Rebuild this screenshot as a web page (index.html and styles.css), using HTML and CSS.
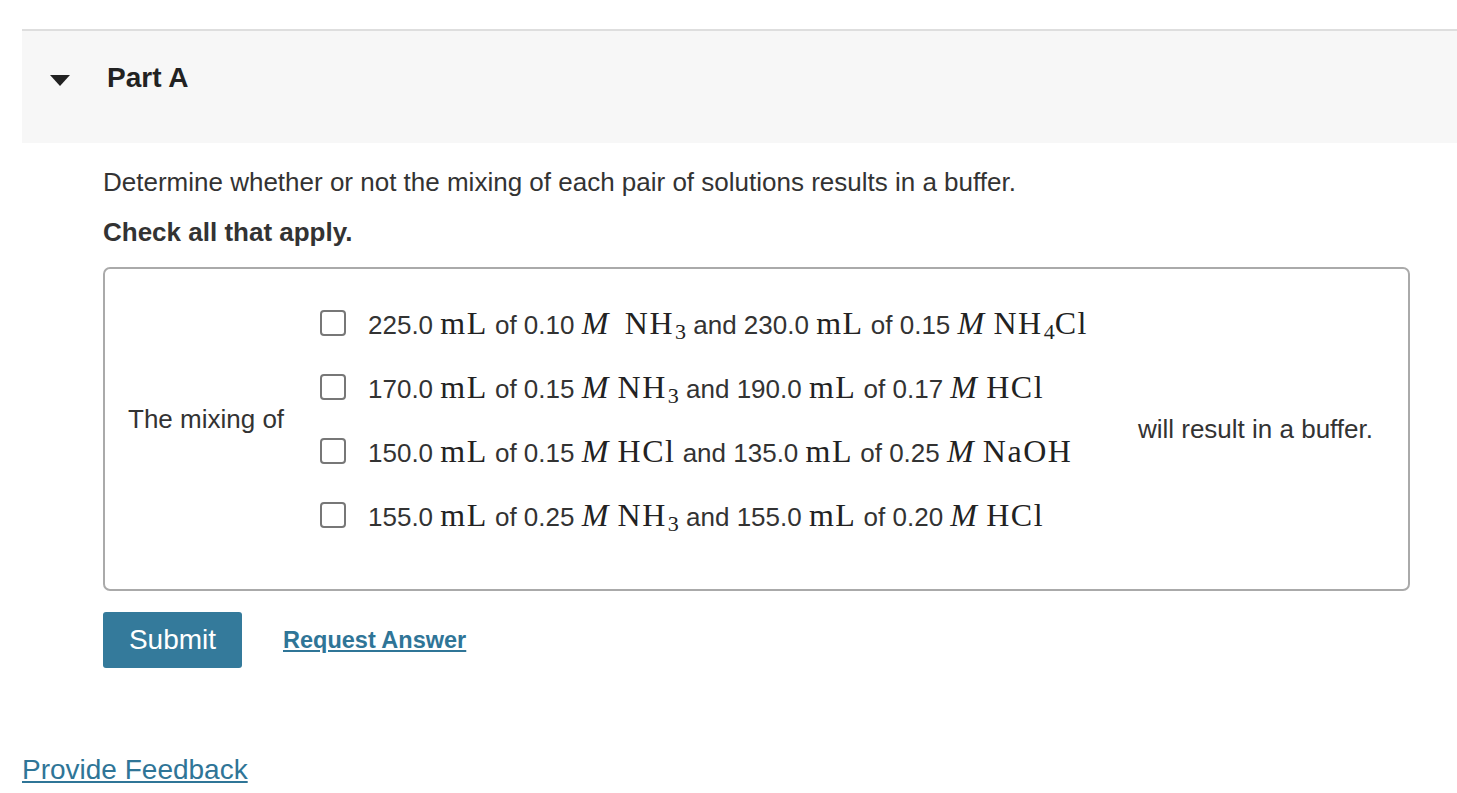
FILE: index.html
```html
<!DOCTYPE html>
<html>
<head>
<meta charset="utf-8">
<link rel="stylesheet" href="styles.css">
</head>
<body>
<div class="page">
  <div class="part-header">
    <span class="caret"></span>
    <h2 class="part-title">Part A</h2>
  </div>
  <div class="part-body">
    <p class="prompt">Determine whether or not the mixing of each pair of solutions results in a buffer.</p>
    <p class="instr">Check all that apply.</p>
    <div class="answer-box">
      <div class="lead">The mixing of</div>
      <ul class="options">
        <li class="opt"><span class="cb"></span><span class="opt-text">225.0 <span class="m">mL</span> of 0.10 <span class="m mi">M</span>&nbsp; <span class="m">NH<sub>3</sub></span> and 230.0 <span class="m">mL</span> of 0.15 <span class="m mi">M</span> <span class="m">NH<sub>4</sub>Cl</span></span></li>
        <li class="opt"><span class="cb"></span><span class="opt-text">170.0 <span class="m">mL</span> of 0.15 <span class="m mi">M</span> <span class="m">NH<sub>3</sub></span> and 190.0 <span class="m">mL</span> of 0.17 <span class="m mi">M</span> <span class="m">HCl</span></span></li>
        <li class="opt"><span class="cb"></span><span class="opt-text">150.0 <span class="m">mL</span> of 0.15 <span class="m mi">M</span> <span class="m">HCl</span> and 135.0 <span class="m">mL</span> of 0.25 <span class="m mi">M</span> <span class="m">NaOH</span></span></li>
        <li class="opt"><span class="cb"></span><span class="opt-text">155.0 <span class="m">mL</span> of 0.25 <span class="m mi">M</span> <span class="m">NH<sub>3</sub></span> and 155.0 <span class="m">mL</span> of 0.20 <span class="m mi">M</span> <span class="m">HCl</span></span></li>
      </ul>
      <div class="trail">will result in a buffer.</div>
    </div>
    <div class="actions">
      <button class="btn-submit">Submit</button>
      <a class="link-req" href="#">Request Answer</a>
    </div>
  </div>
  <a class="feedback" href="#">Provide Feedback</a>
</div>
</body>
</html>
```

FILE: styles.css
```css
html, body {
  margin: 0;
  padding: 0;
  background: #fff;
}
body {
  font-family: "Liberation Sans", Arial, Helvetica, sans-serif;
  color: #333;
}
.page {
  padding: 29px 0 0 22px;
}
.part-header {
  display: flex;
  align-items: center;
  background: #f7f7f7;
  border-top: 2px solid #dedede;
  padding-left: 28px;
  padding-bottom: 18px;
  box-sizing: border-box;
  height: 114px;
}
.caret {
  width: 0;
  height: 0;
  border-left: 10px solid transparent;
  border-right: 10px solid transparent;
  border-top: 11px solid #222;
  margin-top: 4px;
}
.part-title {
  margin: 0 0 0 37px;
  font-size: 28px;
  font-weight: bold;
  color: #222;
}
.part-body {
  padding: 22px 47px 0 81px;
}
.prompt {
  margin: 0;
  font-size: 26px;
  line-height: 34px;
}
.instr {
  margin: 16px 0 0;
  font-size: 26px;
  line-height: 34px;
  font-weight: bold;
}
.answer-box {
  margin-top: 18px;
  border: 2px solid #aaa;
  border-radius: 7px;
  height: 324px;
  box-sizing: border-box;
  display: grid;
  grid-template-columns: 192px 1fr auto;
  align-items: center;
  padding: 0 35px 0 23px;
}
.lead {
  font-size: 26px;
  padding-bottom: 20px;
}
.trail {
  font-size: 26px;
}
.options {
  list-style: none;
  margin: 0;
  padding: 22px 0 42px;
}
.opt {
  display: flex;
  align-items: center;
  height: 64px;
  font-size: 26px;
  white-space: nowrap;
}
.cb {
  width: 22px;
  height: 22px;
  border: 2px solid #777;
  border-radius: 4px;
  flex: none;
  margin-right: 22px;
}
.m {
  font-family: "Liberation Serif", "Times New Roman", serif;
  font-size: 32px;
  letter-spacing: 1.5px;
  color: #222;
}
.mi {
  font-style: italic;
  letter-spacing: 0;
  margin-right: 2px;
}
.m sub {
  font-size: 22px;
  vertical-align: -5px;
  line-height: 0;
  letter-spacing: 0;
  margin-left: 1px;
}
.actions {
  display: flex;
  align-items: center;
  margin-top: 21px;
}
.btn-submit {
  width: 139px;
  height: 56px;
  background: #347a9b;
  color: #fff;
  border: none;
  border-radius: 3px;
  font-family: "Liberation Sans", Arial, sans-serif;
  font-size: 28px;
}
.link-req {
  margin-left: 41px;
  color: #2f7597;
  font-size: 23.5px;
  font-weight: bold;
  text-decoration: underline;
}
.feedback {
  display: inline-block;
  margin-top: 86px;
  color: #2f7597;
  font-size: 28px;
  text-decoration: underline;
}
```
